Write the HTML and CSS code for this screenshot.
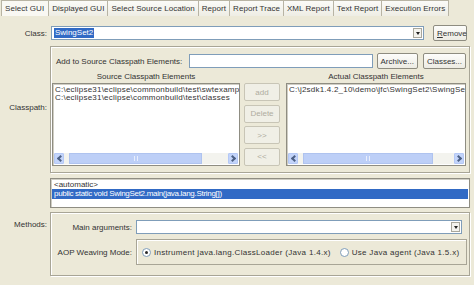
FILE: index.html
```html
<!DOCTYPE html>
<html>
<head>
    <meta charset="UTF-8">
    <title>Select GUI</title>
    <link rel="stylesheet" href="styles.css">
</head>
<body>
<div class="tabs">
    <div class="tab active">Select GUI</div>
    <div class="tab">Displayed GUI</div>
    <div class="tab">Select Source Location</div>
    <div class="tab">Report</div>
    <div class="tab">Report Trace</div>
    <div class="tab">XML Report</div>
    <div class="tab">Text Report</div>
    <div class="tab">Execution Errors</div>
</div>

<div class="pane">
    <!-- class -->
    <div class="row class-row">
        <div class="side">Class:</div>
        <div class="combo grow"><span class="picked">SwingSet2</span><span class="drop"></span></div>
        <button class="btn remove"><u>R</u>emove</button>
    </div>

    <!-- classpath -->
    <div class="row">
        <div class="side">Classpath:</div>
        <div class="group classpath">
            <div class="add-row">
                <span class="add-label">Add to Source Classpath Elements:</span>
                <div class="field grow"></div>
                <button class="btn">Archive...</button>
                <button class="btn">Classes...</button>
            </div>
            <div class="cp-grid">
                <div class="cap">Source Classpath Elements</div>
                <div></div>
                <div class="cap">Actual Classpath Elements</div>

                <div class="list cp-list">
                    <div class="items">
                        <div>C:\eclipse31\eclipse\commonbuild\test\swtexamples</div>
                        <div>C:\eclipse31\eclipse\commonbuild\test\classes</div>
                    </div>
                    <div class="hscroll">
                        <span class="arrow left"></span>
                        <span class="thumb" style="width:133px"><i></i></span>
                        <span class="track"></span>
                        <span class="arrow right"></span>
                    </div>
                </div>
                <div class="moves">
                    <button class="btn off">add</button>
                    <button class="btn off">Delete</button>
                    <button class="btn off">&gt;&gt;</button>
                    <button class="btn off">&lt;&lt;</button>
                </div>
                <div class="list cp-list">
                    <div class="items">
                        <div>C:\j2sdk1.4.2_10\demo\jfc\SwingSet2\SwingSet2.jar</div>
                    </div>
                    <div class="hscroll">
                        <span class="arrow left"></span>
                        <span class="thumb" style="width:130px"><i></i></span>
                        <span class="track"></span>
                        <span class="arrow right"></span>
                    </div>
                </div>
            </div>
        </div>
    </div>

    <!-- methods -->
    <div class="row">
        <div class="side">Methods:</div>
        <div class="methods">
            <div class="list m-list">
                <div>&lt;automatic&gt;</div>
                <div class="sel">public static void SwingSet2.main(java.lang.String[])</div>
            </div>
            <div class="group m-panel">
                <div class="frow">
                    <span class="flabel">Main arguments:</span>
                    <div class="combo grow"><span></span><span class="drop"></span></div>
                </div>
                <div class="frow">
                    <span class="flabel">AOP Weaving Mode:</span>
                    <div class="radios">
                        <span class="radio on"></span>Instrument java.lang.ClassLoader (Java 1.4.x)
                        <span class="radio"></span>Use Java agent (Java 1.5.x)
                    </div>
                </div>
            </div>
        </div>
    </div>
</div>
</body>
</html>
```

FILE: styles.css
```css
*{
    box-sizing:border-box;
    font-family:"Liberation Sans",Arial,sans-serif;
    font-size:8px;
}

body{
    margin:0;
    background:#ECE9D8;
    color:#333;
    width:474px;
    height:285px;
    overflow:hidden;
}

/* tab strip */
.tabs{
    display:flex;
    height:16px;
    padding-left:1px;
}

.tab{
    padding:0 3px;
    line-height:15px;
    border:1px solid #B8B4A4;
    border-bottom:none;
    border-left:none;
    background:linear-gradient(#FBFBF8,#EEEDE4);
    white-space:nowrap;
    letter-spacing:0.05px;
}

.tab.active{
    background:#F9F8F3;
    border-left:1px solid #B8B4A4;
    padding:0 4px 0 3px;
}

.pane{
    padding:9px 4px 0 0;
}

.row{
    display:grid;
    grid-template-columns:50px 1fr;
    align-items:center;
}

.side{
    text-align:right;
    padding-right:3px;
}

.class-row{
    grid-template-columns:50px 1fr 34px;
    padding-right:3px;
}

.class-row .combo{
    margin:0 9px 0 1px;
}

.grow{
    flex:1;
}

/* inputs */
.combo,.field{
    height:14px;
    background:#fff;
    border:1px solid #7F9DB9;
    display:flex;
    align-items:center;
}

.combo{
    justify-content:space-between;
    padding:0 1px 0 2px;
}

.picked{
    background:#316AC5;
    color:#fff;
    line-height:10px;
    padding:0 1px;
}

.drop{
    width:9px;
    height:10px;
    border:1px solid #A9A79B;
    background:#F4F3EE;
    position:relative;
}

.drop::after{
    content:"";
    position:absolute;
    left:2px;
    top:3px;
    border:2px solid transparent;
    border-top:3px solid #222;
}

.btn{
    height:16px;
    padding:0 3px;
    border:1px solid #8E8C80;
    border-radius:2px;
    background:linear-gradient(#FDFDFB,#ECEBE3);
    color:#333;
    font-size:8px;
    white-space:nowrap;
}

.btn.off{
    color:#AFACA0;
    border-color:#C8C5B6;
    background:#F0EFE6;
    height:18px;
    width:36px;
}

/* etched groups */
.group{
    border:1px solid #A8A596;
    box-shadow:inset 1px 1px 0 #fff, 1px 1px 0 #fff;
}

.classpath{
    margin-top:5px;
    height:127px;
    padding:6px 3px 5px 1px;
}

.add-row{
    display:flex;
    align-items:center;
    gap:4px;
    padding-left:4px;
}

.add-row .field{
    margin-left:3px;
}

.add-row .btn:last-child{
    margin-left:1px;
}

.cp-grid{
    display:grid;
    grid-template-columns:188px 36px 180px;
    column-gap:5px;
    margin-top:3px;
}

.cap{
    text-align:center;
    line-height:10px;
    padding-bottom:1px;
}

.list{
    background:#fff;
    border:1px solid #8F8D82;
    box-shadow:inset 1px 1px 0 #D0CEC4;
    white-space:nowrap;
    overflow:hidden;
}

.cp-list{
    height:83px;
    display:flex;
    flex-direction:column;
}

.items{
    flex:1;
    padding:2px 2px 0;
    line-height:8px;
    letter-spacing:0.22px;
    overflow:hidden;
}

.hscroll{
    height:11px;
    display:flex;
    background:#F3F3EE;
    margin:0 1px 1px;
}

.arrow{
    width:10px;
    background:#C3D4FA;
    border:1px solid #B4C8F6;
    border-radius:1px;
    position:relative;
}

.arrow::after{
    content:"";
    position:absolute;
    top:2px;
    left:2px;
    width:3px;
    height:3px;
    border:solid #4D6185;
    border-width:0 2px 2px 0;
}

.arrow.left::after{
    transform:rotate(135deg);
    left:3px;
}

.arrow.right::after{
    transform:rotate(-45deg);
    left:1px;
}

.thumb{
    margin-left:5px;
    background:#BDCFF7;
    border:1px solid #AFC3EF;
    display:flex;
    justify-content:center;
    align-items:center;
}

.thumb i{
    width:4px;
    height:5px;
    border-left:1px solid #E8EEFC;
    border-right:1px solid #E8EEFC;
}

.track{
    flex:1;
}

.moves{
    display:flex;
    flex-direction:column;
    justify-content:space-between;
    margin-left:-1px;
}

/* methods */
.methods{
    margin-top:5px;
}

.m-list{
    height:30px;
    padding:1px;
    line-height:9px;
}

.m-list div{
    padding-left:2px;
}

.m-list .sel{
    background:#316AC5;
    color:#fff;
    line-height:10px;
    letter-spacing:-0.3px;
}

.m-panel{
    margin-top:4px;
    height:64px;
    padding:7px 2px 0 0;
}

.frow{
    display:grid;
    grid-template-columns:85px 1fr;
    align-items:center;
}

.frow + .frow{
    margin-top:5px;
}

.flabel{
    text-align:right;
    padding-right:4px;
}

.m-panel .combo{
    margin-right:5px;
}

.radios{
    height:26px;
    border:1px solid #A8A596;
    box-shadow:inset 1px 1px 0 #fff;
    display:flex;
    align-items:center;
    padding-left:5px;
    letter-spacing:0.3px;
}

.radio{
    width:9px;
    height:9px;
    border:1px solid #7F9DB9;
    border-radius:50%;
    background:#fff;
    margin-right:3px;
    position:relative;
}

.radios .radio:last-of-type{
    margin-left:9px;
}

.radios .radio:first-child{
    margin-left:0;
}

.radio.on::after{
    content:"";
    position:absolute;
    left:2px;
    top:2px;
    width:3px;
    height:3px;
    border-radius:50%;
    background:#2A2A2A;
}
```
